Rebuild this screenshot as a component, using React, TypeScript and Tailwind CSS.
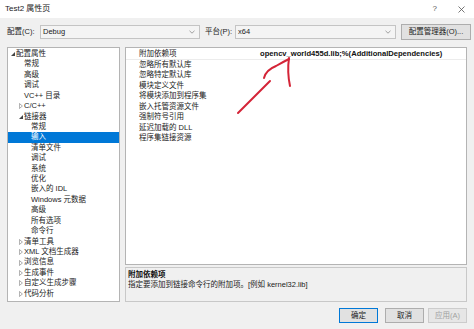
import React from "react";

type Node = { t: string; lvl: 0 | 1 | 2; exp?: "open" | "closed"; sel?: boolean };

const tree: Node[] = [
  { t: "配置属性", lvl: 0, exp: "open" },
  { t: "常规", lvl: 1 },
  { t: "高级", lvl: 1 },
  { t: "调试", lvl: 1 },
  { t: "VC++ 目录", lvl: 1 },
  { t: "C/C++", lvl: 1, exp: "closed" },
  { t: "链接器", lvl: 1, exp: "open" },
  { t: "常规", lvl: 2 },
  { t: "输入", lvl: 2, sel: true },
  { t: "清单文件", lvl: 2 },
  { t: "调试", lvl: 2 },
  { t: "系统", lvl: 2 },
  { t: "优化", lvl: 2 },
  { t: "嵌入的 IDL", lvl: 2 },
  { t: "Windows 元数据", lvl: 2 },
  { t: "高级", lvl: 2 },
  { t: "所有选项", lvl: 2 },
  { t: "命令行", lvl: 2 },
  { t: "清单工具", lvl: 1, exp: "closed" },
  { t: "XML 文档生成器", lvl: 1, exp: "closed" },
  { t: "浏览信息", lvl: 1, exp: "closed" },
  { t: "生成事件", lvl: 1, exp: "closed" },
  { t: "自定义生成步骤", lvl: 1, exp: "closed" },
  { t: "代码分析", lvl: 1, exp: "closed" },
];

const props = [
  "附加依赖项",
  "忽略所有默认库",
  "忽略特定默认库",
  "模块定义文件",
  "将模块添加到程序集",
  "嵌入托管资源文件",
  "强制符号引用",
  "延迟加载的 DLL",
  "程序集链接资源",
];

const FONT = { fontFamily: '"Liberation Sans", "Noto Sans CJK SC", sans-serif' };

function Chevron() {
  return (
    <svg width="6" height="4" viewBox="0 0 6 4" className="shrink-0">
      <path d="M0.5 0.8 L3 3.2 L5.5 0.8" fill="none" stroke="#8a8a8a" strokeWidth="0.8" />
    </svg>
  );
}

function Tri({ exp }: { exp?: "open" | "closed" }) {
  if (exp === "open")
    return (
      <svg width="4" height="4" viewBox="0 0 4 4">
        <path d="M4 0 L4 4 L0 4 Z" fill="#444" />
      </svg>
    );
  if (exp === "closed")
    return (
      <svg width="4" height="6" viewBox="0 0 4 6">
        <path d="M0.4 0.5 L3.4 3 L0.4 5.5 Z" fill="none" stroke="#888" strokeWidth="0.7" />
      </svg>
    );
  return null;
}

export default function App() {
  return (
    <div
      className="w-[474px] h-[329px] bg-[#f0f0f0] flex flex-col text-[#222] overflow-hidden relative"
      style={FONT}
    >
      {/* title bar */}
      <div className="h-[18px] bg-white flex items-center justify-between pl-[5px] pr-[9px]">
        <span className="text-[8px] leading-[10px] text-[#222]">Test2 属性页</span>
        <div className="flex items-center gap-[21px] text-[#555]">
          <span className="text-[8px] leading-[10px]">?</span>
          <svg width="7" height="7" viewBox="0 0 7 7">
            <path d="M0.5 0.5 L6.5 6.5 M6.5 0.5 L0.5 6.5" stroke="#555" strokeWidth="0.8" />
          </svg>
        </div>
      </div>

      {/* config row */}
      <div className="mt-[7px] h-[14px] flex items-center pl-[7px] text-[7.5px] leading-[10px]">
        <span className="w-[33px]">配置(C):</span>
        <div className="w-[160px] h-[14px] bg-[#f4f4f4] border border-[#c4c4c4] flex items-center justify-between pl-[2px] pr-[4px]">
          <span>Debug</span>
          <Chevron />
        </div>
        <span className="ml-[5px] w-[30px]">平台(P):</span>
        <div className="w-[161px] h-[14px] bg-[#f4f4f4] border border-[#c4c4c4] flex items-center justify-between pl-[2px] pr-[4px]">
          <span>x64</span>
          <Chevron />
        </div>
        <div className="ml-[5px] w-[70px] h-[16px] bg-[#e1e1e1] border border-[#adadad] flex items-center justify-center">
          配置管理器(O)...
        </div>
      </div>

      {/* main area */}
      <div className="mt-[8px] h-[255px] flex pl-[7px] text-[7.5px]">
        {/* tree */}
        <div className="w-[113px] h-full bg-white border border-[#b4b4b4] pt-[1px]">
          {tree.map((n, i) => (
            <div
              key={i}
              className={
                "h-[10.43px] leading-[10.43px] flex items-center " +
                (n.lvl === 0 ? "pl-[3px] " : n.lvl === 1 ? "pl-[11px] " : "pl-[18px] ") +
                (n.sel ? "bg-[#0078d7] text-white" : "")
              }
            >
              <span className="w-[5px] flex items-center">
                <Tri exp={n.exp} />
              </span>
              <span className="whitespace-nowrap">{n.t}</span>
            </div>
          ))}
        </div>

        {/* right column */}
        <div className="ml-[5px] w-[342px] h-full flex flex-col">
          <div className="h-[218px] bg-white border border-[#b4b4b4] pt-[1px]">
            {props.map((p, i) => (
              <div
                key={i}
                className={
                  "h-[10.5px] leading-[10.5px] flex " +
                  (i === 0 ? "border-b border-[#ececec]" : "")
                }
              >
                <div className="w-[130px] pl-[13px] whitespace-nowrap">{p}</div>
                <div className="pl-[4px] whitespace-nowrap font-bold text-[#111] text-[7.6px]">
                  {i === 0 ? "opencv_world455d.lib;%(AdditionalDependencies)" : ""}
                </div>
              </div>
            ))}
          </div>
          <div className="mt-[2px] h-[35px] bg-[#f0f0f0] border border-[#c8c8c8] pl-[2px] pt-[2px] leading-[9.5px]">
            <div className="font-bold text-[#111]">附加依赖项</div>
            <div>指定要添加到链接命令行的附加项。[例如 kernel32.lib]</div>
          </div>
        </div>
      </div>

      {/* footer */}
      <div className="mt-[6px] h-[15px] flex justify-end pr-[7px] text-[7.5px]">
        <div className="w-[39px] h-[15px] bg-[#e1e1e1] border border-[#0078d7] flex items-center justify-center">
          确定
        </div>
        <div className="ml-[7px] w-[39px] h-[15px] bg-[#e1e1e1] border border-[#adadad] flex items-center justify-center">
          取消
        </div>
        <div className="ml-[4px] w-[39px] h-[15px] bg-[#e6e6e6] border border-[#cccccc] flex items-center justify-center text-[#a0a0a0]">
          应用(A)
        </div>
      </div>

      {/* red annotation arrow */}
      <svg
        className="absolute left-0 top-0 pointer-events-none"
        width="474"
        height="329"
        viewBox="0 0 474 329"
      >
        <g fill="none" stroke="#d42437" strokeWidth="2" strokeLinecap="round" strokeLinejoin="round">
          <path d="M238 113 Q254 97 270 81" />
          <path d="M264 78 Q266 70 276 66 Q283 62 289 59" />
          <path d="M289 58 Q287 72 290 86" />
        </g>
      </svg>
    </div>
  );
}
